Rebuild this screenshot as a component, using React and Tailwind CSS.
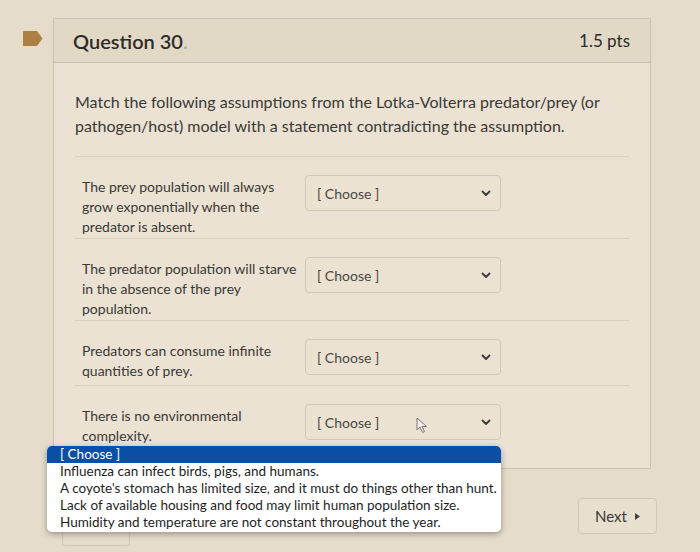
import React from 'react'

const rows = [
  { text: 'The prey population will always grow exponentially when the predator is absent.', h: 'h-[82px]' },
  { text: 'The predator population will starve in the absence of the prey population.', h: 'h-[82px]' },
  { text: 'Predators can consume infinite quantities of prey.', h: 'h-[65px]' },
  { text: 'There is no environmental complexity.', h: 'h-[82px]' },
]

const options = [
  'Influenza can infect birds, pigs, and humans.',
  "A coyote's stomach has limited size, and it must do things other than hunt.",
  'Lack of available housing and food may limit human population size.',
  'Humidity and temperature are not constant throughout the year.',
]

const Chevron = () => (
  <svg width="10" height="7" viewBox="0 0 10 7" fill="none">
    <path d="M1.5 1.5L5 5L8.5 1.5" stroke="#3a3a3a" strokeWidth="1.8" strokeLinecap="round" strokeLinejoin="round" />
  </svg>
)

const Select = ({ cursor }) => (
  <div className="relative -mt-[2px] flex h-[36px] w-[196px] shrink-0 items-center justify-between rounded border border-[#d2c8b5] bg-[#ebe2d2] pl-[11px] pr-[9px]">
    <span className="text-[14px] text-[#4a4843]">[ Choose ]</span>
    <Chevron />
    {cursor && (
      <svg className="absolute left-[110px] top-[12px]" width="12" height="17" viewBox="0 0 12 17" fill="none">
        <path d="M1 1V13L4 10L6.5 15.5L8.5 14.5L6 9.5H10.5L1 1Z" fill="#f4efe6" stroke="#777" strokeWidth="1" strokeLinejoin="round" />
      </svg>
    )}
  </div>
)

export default function App() {
  return (
    <div className="relative h-[552px] w-[700px] overflow-hidden bg-[#e6dccb] font-['Lato',sans-serif] text-[#3a3935]">
      <svg className="absolute left-[23px] top-[31px]" width="20" height="15" viewBox="0 0 20 15">
        <path d="M1 0H14L19.5 7.5L14 15H1C0.4 15 0 14.6 0 14V1C0 0.4 0.4 0 1 0Z" fill="#ae7f43" />
      </svg>

      <div className="ml-[53px] mt-[18px] w-[598px] border border-[#cbc1af] bg-[#ebe2d3]">
        <div className="flex h-[44px] items-center justify-between border-b border-[#cbc1af] bg-[#e2d8c6] pl-[19px] pr-[20px]">
          <span className="text-[20px] font-semibold text-[#2c2b28]">Question 30<span className="text-[#aaa]">.</span></span>
          <span className="text-[17px] text-[#2c2b28]">1.5 pts</span>
        </div>

        <div className="px-[21px] pt-[27px]">
          <p className="w-[540px] text-[16px] leading-[24px] text-[#3a3935]">
            Match the following assumptions from the Lotka-Volterra predator/prey (or pathogen/host) model with a statement contradicting the assumption.
          </p>
          <div className="mt-[18px] border-t border-[#d9d0bf]">
            {rows.map((r, i) => (
              <div key={i} className={`flex gap-[7px] px-[7px] pt-[20px] ${r.h} ${i < 3 ? 'border-b border-[#d9d0bf]' : ''}`}>
                <p className="w-[216px] text-[14px] leading-[20px] text-[#3a3935]">{r.text}</p>
                <Select cursor={i === 3} />
              </div>
            ))}
          </div>
        </div>
      </div>

      <div className="mt-[29px] flex items-start justify-between pl-[62px] pr-[43px]">
        <div className="mt-[10px] h-[38px] w-[68px] rounded border border-[#d2c8b5]" />
        <div className="flex h-[36px] w-[79px] items-center justify-center gap-[8px] rounded border border-[#d2c8b5] bg-[#e8dfcf]">
          <span className="text-[15px] text-[#3a3935]">Next</span>
          <svg width="5" height="7" viewBox="0 0 5 7"><path d="M0 0L5 3.5L0 7Z" fill="#444" /></svg>
        </div>
      </div>

      <div className="absolute left-[47px] top-[446px] w-[454px] overflow-hidden rounded-[5px] bg-white text-[13.5px] leading-[17px] text-[#1e1e1e] shadow-[0_2px_6px_rgba(0,0,0,0.35)]">
        <div className="bg-[#0b4ea6] px-[13px] text-white">[ Choose ]</div>
        <div className="pb-[1px]">
          {options.map((o) => (
            <div key={o} className="whitespace-nowrap px-[13px]">{o}</div>
          ))}
        </div>
      </div>
    </div>
  )
}
